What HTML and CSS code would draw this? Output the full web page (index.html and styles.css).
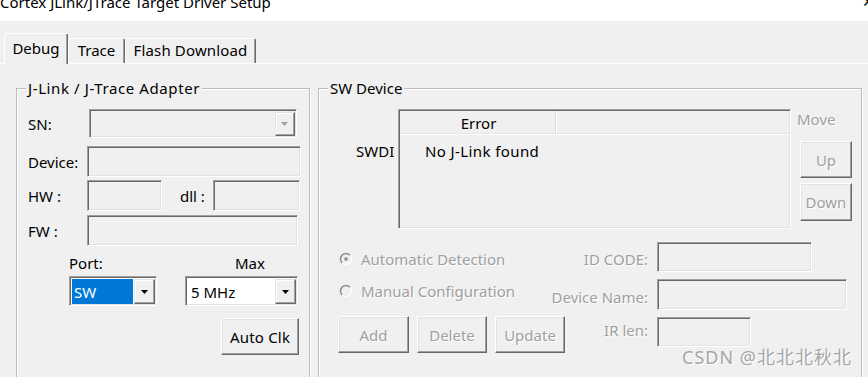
FILE: index.html
```html
<!DOCTYPE html>
<html>
<head>
<meta charset="utf-8">
<title>Cortex JLink/JTrace Target Driver Setup</title>
<link rel="stylesheet" href="styles.css">
</head>
<body>
<div class="titlebar"><span class="title">Cortex JLink/JTrace Target Driver Setup</span><span class="close">✕</span></div>
<div class="tabs">
  <div class="tab active t-debug">Debug</div>
  <div class="tab t-trace">Trace</div>
  <div class="tab t-flash">Flash Download</div>
</div>
<div class="page">
  <fieldset class="group jlink">
    <legend>J-Link / J-Trace Adapter</legend>
    <div class="jl-body">
      <div class="row r-sn"><span class="lbl">SN:</span>
        <div class="combo sn"><span class="val"></span><span class="arrow"><svg width="8" height="4" viewBox="0 0 8 4"><path d="M0 0H7L3.5 4Z" fill="#a0a0a0"/></svg></span></div>
      </div>
      <div class="row r-dev"><span class="lbl">Device:</span><div class="edit w-dev"></div></div>
      <div class="row r-hw"><span class="lbl">HW :</span><div class="edit w-hw"></div><span class="lbl2">dll :</span><div class="edit w-dll"></div></div>
      <div class="row r-fw"><span class="lbl">FW :</span><div class="edit w-fw"></div></div>
      <div class="port-grid">
        <span class="port-lbl">Port:</span><span class="max-lbl">Max</span>
        <div class="combo port"><span class="val sel">SW</span><span class="arrow"><svg width="8" height="4" viewBox="0 0 8 4"><path d="M0 0H7L3.5 4Z" fill="#000"/></svg></span></div>
        <div class="combo max"><span class="val">5 MHz</span><span class="arrow"><svg width="8" height="4" viewBox="0 0 8 4"><path d="M0 0H7L3.5 4Z" fill="#000"/></svg></span></div>
      </div>
      <div class="btn autoclk">Auto Clk</div>
    </div>
  </fieldset>
  <fieldset class="group sw">
    <legend>SW Device</legend>
    <div class="sw-top">
      <div class="swdi">SWDI</div>
      <div class="list">
        <div class="list-head"><div class="col">Error</div></div>
        <div class="list-body"><div class="item">No J-Link found</div></div>
      </div>
      <div class="move">
        <div class="move-lbl dis">Move</div>
        <div class="btn dis up">Up</div>
        <div class="btn dis down">Down</div>
      </div>
    </div>
    <div class="sw-bottom">
      <div class="radio r1 dis"><svg width="14" height="14" viewBox="0 0 14 14"><circle cx="7" cy="7" r="5.5" fill="#f0f0f0" stroke="#fff" stroke-width="1.2"/><path d="M3.11 10.89A5.5 5.5 0 0 1 10.89 3.11" fill="none" stroke="#8c8c8c" stroke-width="1.5"/><circle cx="7" cy="7" r="1.9" fill="#999"/></svg><span>Automatic Detection</span></div>
      <div class="flbl l-id dis">ID CODE:</div>
      <div class="edit b-id"></div>
      <div class="radio r2 dis"><svg width="14" height="14" viewBox="0 0 14 14"><circle cx="7" cy="7" r="5.5" fill="#f0f0f0" stroke="#fff" stroke-width="1.2"/><path d="M3.11 10.89A5.5 5.5 0 0 1 10.89 3.11" fill="none" stroke="#8c8c8c" stroke-width="1.5"/></svg><span>Manual Configuration</span></div>
      <div class="flbl l-dn dis">Device Name:</div>
      <div class="edit b-dn"></div>
      <div class="btns">
        <div class="btn dis b-add">Add</div>
        <div class="btn dis b-del">Delete</div>
        <div class="btn dis b-upd">Update</div>
      </div>
      <div class="flbl l-ir dis">IR len:</div>
      <div class="edit b-ir"></div>
    </div>
  </fieldset>
</div>
<div class="watermark">CSDN @北北北秋北</div>
</body>
</html>
```
FILE: styles.css
```css
* { box-sizing: border-box; }
html, body { margin: 0; padding: 0; overflow: hidden; }
body {
  width: 868px;
  height: 377px;
  position: relative;
  background: #f0f0f0;
  font-family: "Noto Sans", "Open Sans", sans-serif;
  font-size: 15px;
  line-height: 20px;
  color: #000;
}

.titlebar {
  height: 21px;
  background: #fff;
  overflow: hidden;
  display: flex;
  justify-content: space-between;
}
.title { display: block; margin-top: -8px; white-space: nowrap; color: #000; }
.close { display: block; margin-top: -9px; margin-right: -7px; color: #000; }

.tabs {
  height: 42px;
  display: flex;
  align-items: flex-end;
  padding-left: 4px;
}
.tab {
  height: 25px;
  line-height: 23px;
  text-align: center;
  border-top: 1px solid #fff;
  border-left: 1px solid #fff;
  border-right: 1px solid #696969;
  box-shadow: inset -1px 0 0 #a0a0a0;
  border-radius: 2px 2px 0 0;
  background: #f0f0f0;
}
.tab.active {
  height: 31px;
  line-height: 28px;
  margin-bottom: -1px;
  position: relative;
  z-index: 1;
}
.t-debug { width: 64px; }
.t-trace { width: 57px; }
.t-flash { width: 131px; letter-spacing: 0.15px; }

.page {
  display: flex;
  align-items: flex-start;
  border-top: 1px solid #fff;
}

.group {
  margin: 14px 0 0;
  padding: 0;
  min-width: 0;
  height: 340px;
  border: 1px solid #bcbcbc;
  box-shadow: inset 1px 1px 0 #fff, 1px 1px 0 #fff;
}
.group legend {
  margin-left: 9px;
  padding: 0 2px;
  line-height: 20px;
  background: #f0f0f0;
}
.jlink legend { letter-spacing: 0.6px; }
.jlink { margin-left: 16px; width: 294px; }
.sw { margin-left: 8px; width: 544px; }

.dis { color: #a0a0a0; text-shadow: 1px 1px 0 #fff; }

.edit {
  border: 1px solid;
  border-color: #a0a0a0 #fff #fff #a0a0a0;
  box-shadow: inset 1px 1px 0 #696969, inset -1px -1px 0 #e3e3e3;
  background: #f0f0f0;
  flex: none;
}
.btn {
  display: flex;
  align-items: center;
  justify-content: center;
  border: 1px solid;
  border-color: #fff #696969 #696969 #fff;
  box-shadow: inset -1px -1px 0 #a0a0a0, inset 1px 1px 0 #e3e3e3;
  background: #f0f0f0;
  flex: none;
}

.combo {
  display: flex;
  padding: 2px 1px 1px 2px;
  border: 1px solid;
  border-color: #a0a0a0 #fff #fff #a0a0a0;
  box-shadow: inset 1px 1px 0 #696969, inset -1px -1px 0 #e3e3e3;
  background: #fff;
  flex: none;
}
.combo .val {
  flex: 1;
  display: flex;
  align-items: center;
  padding-left: 2px;
  white-space: nowrap;
}
.combo .arrow {
  width: 21px;
  display: flex;
  align-items: center;
  justify-content: center;
  border: 1px solid;
  border-color: #e3e3e3 #696969 #696969 #e3e3e3;
  box-shadow: inset -1px -1px 0 #a0a0a0, inset 1px 1px 0 #fff;
  background: #f0f0f0;
}

/* J-Link group */
.jl-body { padding-left: 11px; }
.row { display: flex; align-items: center; }
.lbl { width: 59px; flex: none; }
.r-sn { margin-top: 11px; height: 29px; }
.r-dev { margin-top: 8px; height: 31px; }
.r-hw { margin-top: 3px; height: 31px; }
.r-fw { margin-top: 4px; height: 31px; }
.sn { margin-left: 2px; width: 208px; height: 29px; background: #f0f0f0; }
.sn .arrow { width: 20px; }
.w-dev { width: 214px; height: 31px; }
.w-hw { width: 75px; height: 31px; }
.lbl2 { margin-left: 18px; width: 33px; flex: none; }
.w-dll { width: 87px; height: 31px; }
.w-fw { width: 211px; height: 31px; }

.port-grid {
  display: grid;
  grid-template-columns: 88px 113px;
  grid-template-rows: 20px 30px;
  column-gap: 28px;
  row-gap: 3px;
  margin-top: 7px;
  margin-left: 41px;
}
.max-lbl { padding-left: 50px; }
.port .val.sel { background: #0078d7; color: #fff; margin-right: 1px; }
.max .val { padding-left: 3px; color: #000; }
.autoclk { margin-left: 193px; margin-top: 12px; width: 78px; height: 37px; color: #000; letter-spacing: 0.2px; }

/* SW Device group */
.sw-top {
  display: flex;
  align-items: flex-start;
  margin-top: 11px;
  padding-left: 37px;
}
.swdi {
  width: 42px;
  flex: none;
  overflow: hidden;
  white-space: nowrap;
  margin-top: 32px;
}
.list {
  width: 393px;
  height: 120px;
  flex: none;
  border: 1px solid;
  border-color: #a0a0a0 #fff #fff #a0a0a0;
  box-shadow: inset 1px 1px 0 #696969, inset -1px -1px 0 #e3e3e3;
  padding: 1px;
  background: #f0f0f0;
}
.list-head {
  height: 24px;
  display: flex;
  border-bottom: 1px solid #fff;
  box-shadow: 0 -1px 0 #e5e5e5 inset;
}
.list-head .col {
  width: 156px;
  text-align: center;
  line-height: 24px;
  border-right: 1px solid #d9d9d9;
  box-shadow: 1px 0 0 #fff;
  padding-left: 2px;
}
.list-body { padding-left: 25px; }
.item { margin-top: 6px; letter-spacing: 0.4px; }

.move { margin-left: 6px; display: flex; flex-direction: column; }
.move-lbl { line-height: 20px; }
.move .up { margin-left: 3px; margin-top: 12px; width: 52px; height: 37px; }
.move .down { margin-left: 3px; margin-top: 5px; width: 52px; height: 38px; }

.sw-bottom {
  display: grid;
  grid-template-columns: 228px 82px auto;
  grid-template-rows: 31px 31px 37px;
  row-gap: 6px;
  margin-top: 13px;
  padding-left: 19px;
}
.radio {
  display: flex;
  align-items: center;
  gap: 8px;
  height: 20px;
  white-space: nowrap;
}
.radio svg { margin-left: 1px; flex: none; }
.r1 { margin-top: 7px; }
.r2 { margin-top: 2px; }
.flbl {
  display: flex;
  justify-content: flex-end;
  align-items: center;
  white-space: nowrap;
}
.l-id { padding-top: 3px; }
.l-dn { padding-top: 4px; }
.l-ir { align-items: flex-start; margin-top: 4px; }
.b-id { margin-left: 9px; width: 155px; height: 30px; }
.b-dn { margin-left: 9px; width: 190px; height: 31px; }
.b-ir { margin-left: 9px; margin-top: 1px; width: 94px; height: 30px; }
.btns { display: flex; gap: 8px; }
.btns .btn { height: 37px; width: 70px; }
.btns .b-add { width: 71px; }

.watermark {
  position: absolute;
  left: 682px;
  top: 346px;
  font-family: "Noto Sans", "Noto Sans CJK SC", sans-serif;
  font-size: 18px;
  line-height: 22px;
  letter-spacing: 1px;
  color: #a6a6a6;
  text-shadow: 1px 1px 0 #fff;
  white-space: nowrap;
}
```
